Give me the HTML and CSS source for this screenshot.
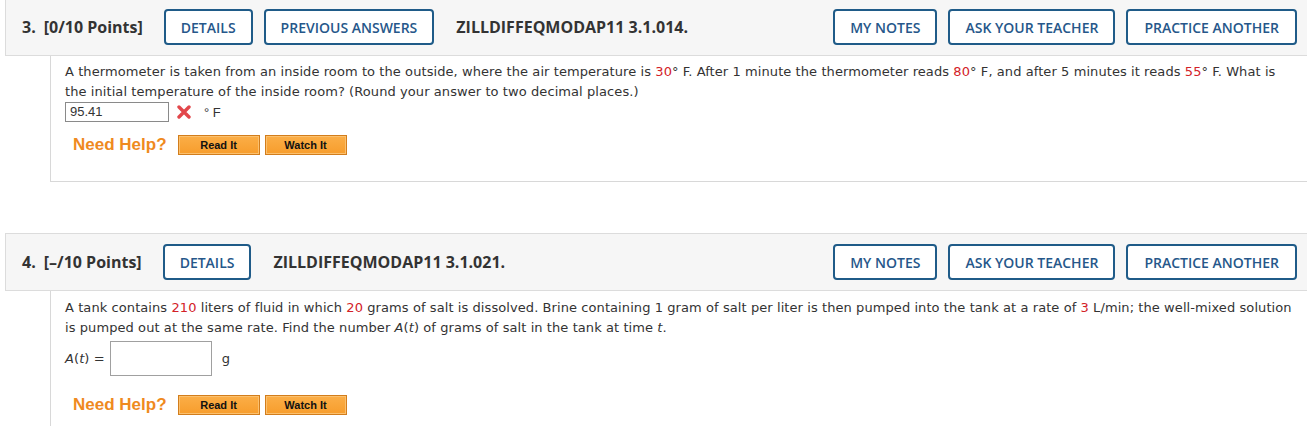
FILE: index.html
```html
<!DOCTYPE html>
<html>
<head>
<meta charset="utf-8">
<link rel="stylesheet" href="styles.css">
</head>
<body>
<div class="page">
  <section class="question">
    <div class="qhead">
      <div class="qnum">3.</div>
      <div class="qpoints">[0/10 Points]</div>
      <button class="hbtn">DETAILS</button>
      <button class="hbtn">PREVIOUS ANSWERS</button>
      <div class="qid">ZILLDIFFEQMODAP11 3.1.014.</div>
      <div class="spacer"></div>
      <button class="hbtn">MY NOTES</button>
      <button class="hbtn">ASK YOUR TEACHER</button>
      <button class="hbtn">PRACTICE ANOTHER</button>
    </div>
    <div class="qbody q3">
      <p class="text">A thermometer is taken from an inside room to the outside, where the air temperature is <span class="red">30</span>° F. After 1 minute the thermometer reads <span class="red">80</span>° F, and after 5 minutes it reads <span class="red">55</span>° F. What is the initial temperature of the inside room? (Round your answer to two decimal places.)</p>
      <div class="answer">
        <div class="ansbox">95.41</div>
        <svg class="xmark" width="14" height="14" viewBox="0 0 14 14"><path d="M2 2 L12 12 M12 2 L2 12" stroke="#e2474b" stroke-width="3.4" stroke-linecap="round"/></svg>
        <span class="unit">° F</span>
      </div>
      <div class="help">
        <span class="needhelp">Need Help?</span>
        <button class="obtn">Read It</button>
        <button class="obtn">Watch It</button>
      </div>
    </div>
  </section>

  <section class="question q4sec">
    <div class="qhead">
      <div class="qnum">4.</div>
      <div class="qpoints">[–/10 Points]</div>
      <button class="hbtn">DETAILS</button>
      <div class="qid">ZILLDIFFEQMODAP11 3.1.021.</div>
      <div class="spacer"></div>
      <button class="hbtn">MY NOTES</button>
      <button class="hbtn">ASK YOUR TEACHER</button>
      <button class="hbtn">PRACTICE ANOTHER</button>
    </div>
    <div class="qbody q4">
      <p class="text">A tank contains <span class="red">210</span> liters of fluid in which <span class="red">20</span> grams of salt is dissolved. Brine containing 1 gram of salt per liter is then pumped into the tank at a rate of <span class="red">3</span> L/min; the well-mixed solution is pumped out at the same rate. Find the number <i>A</i>(<i>t</i>) of grams of salt in the tank at time <i>t</i>.</p>
      <div class="answer2">
        <span class="lbl"><i>A</i>(<i>t</i>) =</span>
        <div class="ansbox2"></div>
        <span class="unit2">g</span>
      </div>
      <div class="help help2">
        <span class="needhelp">Need Help?</span>
        <button class="obtn">Read It</button>
        <button class="obtn">Watch It</button>
      </div>
    </div>
  </section>
</div>
</body>
</html>
```
FILE: styles.css
```css
html, body { margin: 0; padding: 0; background: #fff; }
body { width: 1307px; height: 426px; overflow: hidden; }
.page { margin-top: -2px; padding-left: 5px; }

.question { width: 1320px; }
.q4sec { margin-top: 51px; }

.qhead {
  display: flex;
  align-items: center;
  height: 56px;
  border: 1px solid #dcdcdc;
  background: #f6f6f6;
  padding: 0 0 0 16px;
  font-family: "Open Sans", sans-serif;
  box-sizing: content-box;
  width: 1285px;
}
.qnum { font-weight: 700; font-size: 16px; color: #333; margin-right: 8px; }
.qpoints { font-weight: 700; font-size: 16px; color: #333; margin-right: 21px; }
.qid { font-weight: 700; font-size: 16px; color: #333; margin-left: 11px; }
.spacer { flex: 1; }

.hbtn {
  height: 36px;
  box-sizing: border-box;
  border: 2px solid #1f5b88;
  border-radius: 4px;
  background: #fff;
  color: #26578a;
  font-family: "Open Sans", sans-serif;
  font-weight: 600;
  font-size: 14px;
  padding: 0 15px;
  margin-right: 11px;
  cursor: pointer;
}
.hbtn:nth-last-child(1) { padding: 0 16px; margin-right: 10px; }

.qbody {
  margin-left: 45px;
  border-left: 1px solid #d8d8d8;
  border-bottom: 1px solid #d8d8d8;
  padding: 6px 0 0 14px;
  font-family: "DejaVu Sans", Verdana, sans-serif;
  font-size: 13px;
  color: #333;
}
.q3 { height: 119px; }
.q4 { height: 200px; border-bottom: none; padding-top: 7px; }

.text { margin: 0; line-height: 20px; width: 1234px; letter-spacing: 0.08px; }
.red { color: #d32127; }

.answer { display: flex; align-items: center; height: 20px; }
.ansbox {
  width: 104px; height: 20px; box-sizing: border-box;
  border: 1px solid #8a8a8a;
  font-family: "Liberation Sans", Arial, sans-serif;
  font-size: 13px; color: #333;
  padding: 1px 0 0 4px;
}
.xmark { margin-left: 8px; }
.unit { margin-left: 13px; font-family: "Liberation Sans", Arial, sans-serif; font-size: 13px; }

.help { display: flex; align-items: center; margin-top: 13px; padding-left: 8px; height: 20px; }
.help2 { margin-top: 19px; }
.needhelp {
  font-family: "Liberation Sans", Arial, sans-serif;
  font-weight: 700; font-size: 17px; color: #ef8a1f;
  margin-right: 11px;
}
.obtn {
  width: 82px; height: 20px; box-sizing: border-box;
  border: 1px solid #d27d1c;
  box-shadow: inset 0 0 0 1px #fbc06e;
  background: linear-gradient(#fbae47, #f79d2c);
  font-family: "Liberation Sans", Arial, sans-serif;
  font-weight: 700; font-size: 11px; color: #111;
  padding: 0; margin-right: 5px;
}

.answer2 { display: flex; align-items: center; margin-top: 3px; height: 35px; }
.lbl { font-size: 13px; margin-right: 5px; letter-spacing: 0.08px; }
.ansbox2 { width: 102px; height: 35px; box-sizing: border-box; border: 1px solid #a0a0a0; }
.unit2 { margin-left: 10px; }
```
